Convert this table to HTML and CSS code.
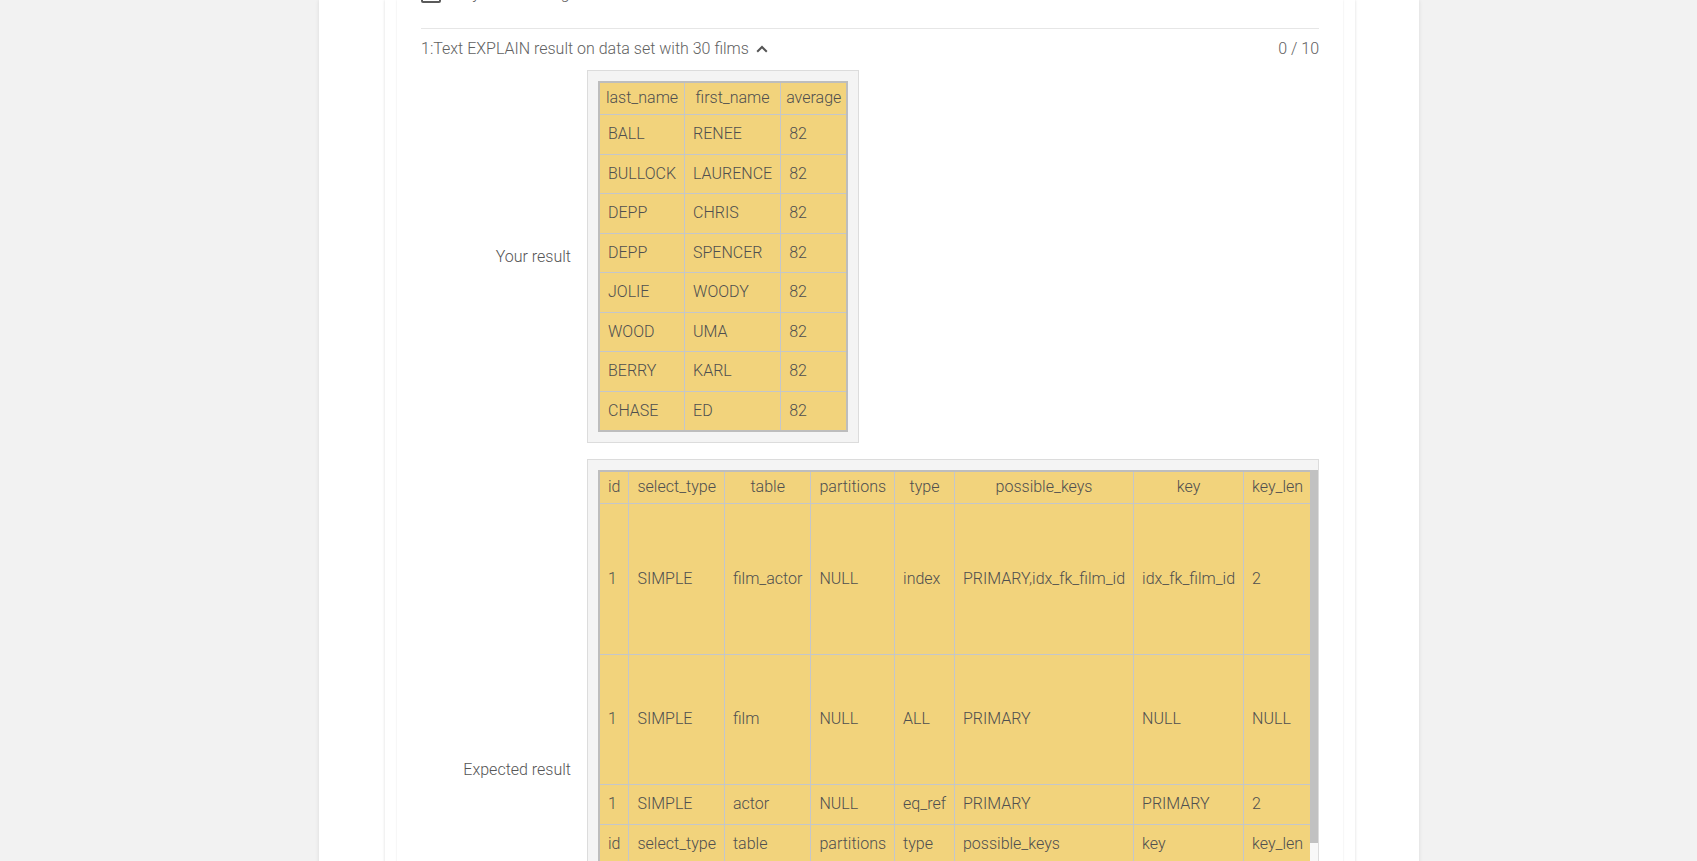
FILE: index.html
```html
<!DOCTYPE html>
<html lang="en">
<head>
<meta charset="utf-8">
<title>Test results</title>
<link rel="stylesheet" href="styles.css">
</head>
<body>
<div class="page">
  <div class="card-outer">
    <div class="card">
      <label class="option"><span class="checkbox"></span><span class="option-text">Only show wrong results</span></label>

      <section class="test">
        <div class="test-head">
          <div class="test-title">
            <span>1:Text EXPLAIN result on data set with 30 films</span>
            <svg class="chevron" width="12" height="8" viewBox="0 0 12 8"><path d="M1.2 6.8 L6 2 L10.8 6.8" fill="none" stroke="#555" stroke-width="2"/></svg>
          </div>
          <div class="score">0 / 10</div>
        </div>

        <div class="result-row">
          <div class="result-label">Your result</div>
          <div class="result-box">
            <table class="grid">
              <tr><th>last_name</th><th>first_name</th><th>average</th></tr>
              <tr><td>BALL</td><td>RENEE</td><td>82</td></tr>
              <tr><td>BULLOCK</td><td>LAURENCE</td><td>82</td></tr>
              <tr><td>DEPP</td><td>CHRIS</td><td>82</td></tr>
              <tr><td>DEPP</td><td>SPENCER</td><td>82</td></tr>
              <tr><td>JOLIE</td><td>WOODY</td><td>82</td></tr>
              <tr><td>WOOD</td><td>UMA</td><td>82</td></tr>
              <tr><td>BERRY</td><td>KARL</td><td>82</td></tr>
              <tr><td>CHASE</td><td>ED</td><td>82</td></tr>
            </table>
          </div>
        </div>

        <div class="result-row">
          <div class="result-label">Expected result</div>
          <div class="result-box result-box--scroll">
            <div class="scroller">
              <table class="grid">
                <tr><th>id</th><th>select_type</th><th>table</th><th>partitions</th><th>type</th><th>possible_keys</th><th>key</th><th>key_len</th><th>ref</th><th>rows</th><th>filtered</th><th>Extra</th></tr>
                <tr class="row-xl"><td>1</td><td>SIMPLE</td><td>film_actor</td><td>NULL</td><td>index</td><td>PRIMARY,idx_fk_film_id</td><td>idx_fk_film_id</td><td>2</td><td>NULL</td><td>5462</td><td>100.00</td><td>Using index; Using temporary; Using filesort</td></tr>
                <tr class="row-l"><td>1</td><td>SIMPLE</td><td>film</td><td>NULL</td><td>ALL</td><td>PRIMARY</td><td>NULL</td><td>NULL</td><td>NULL</td><td>1000</td><td>10.00</td><td>Using where; Using join buffer (Block Nested Loop)</td></tr>
                <tr><td>1</td><td>SIMPLE</td><td>actor</td><td>NULL</td><td>eq_ref</td><td>PRIMARY</td><td>PRIMARY</td><td>2</td><td>sakila.film_actor.actor_id</td><td>1</td><td>100.00</td><td>NULL</td></tr>
                <tr><td>id</td><td>select_type</td><td>table</td><td>partitions</td><td>type</td><td>possible_keys</td><td>key</td><td>key_len</td><td>ref</td><td>rows</td><td>filtered</td><td>Extra</td></tr>
                <tr class="row-xl"><td>1</td><td>SIMPLE</td><td>film_actor</td><td>NULL</td><td>index</td><td>PRIMARY,idx_fk_film_id</td><td>idx_fk_film_id</td><td>2</td><td>NULL</td><td>5462</td><td>100.00</td><td>Using index; Using temporary; Using filesort</td></tr>
                <tr class="row-l"><td>1</td><td>SIMPLE</td><td>film</td><td>NULL</td><td>ALL</td><td>PRIMARY</td><td>NULL</td><td>NULL</td><td>NULL</td><td>1000</td><td>10.00</td><td>Using where; Using join buffer (Block Nested Loop)</td></tr>
                <tr><td>1</td><td>SIMPLE</td><td>actor</td><td>NULL</td><td>eq_ref</td><td>PRIMARY</td><td>PRIMARY</td><td>2</td><td>sakila.film_actor.actor_id</td><td>1</td><td>100.00</td><td>NULL</td></tr>
              </table>
            </div>
            <div class="scrollbar"><div class="scrollbar-thumb"></div></div>
          </div>
        </div>
      </section>
    </div>
  </div>
</div>
</body>
</html>
```

FILE: styles.css
```css
html, body {
  margin: 0;
  height: 100%;
  overflow: hidden;
}

body {
  background: #f2f2f2;
  font-family: Roboto, "Liberation Sans", sans-serif;
  font-weight: 300;
  font-size: 16px;
  color: #555;
}

.page {
  width: 1100px;
  margin-left: 319px;
  min-height: 100%;
  box-sizing: border-box;
  padding: 0 64px 0 66px;
  background: #fff;
  box-shadow: 0 0 4px rgba(0, 0, 0, 0.10);
  display: flow-root;
}

.card-outer {
  min-height: 100vh;
  padding: 0 12px;
  background: #fff;
  box-shadow: 0 0 3px rgba(0, 0, 0, 0.14);
  display: flow-root;
}

.card {
  min-height: 100vh;
  padding: 0 24px;
  background: #fff;
  box-shadow: 0 0 2px rgba(0, 0, 0, 0.10);
  display: flow-root;
}

.option {
  display: flex;
  align-items: center;
  gap: 8px;
  height: 20px;
  margin-top: -17px;
  line-height: 19px;
  color: #555;
}

.checkbox {
  width: 16px;
  height: 16px;
  border: 2px solid #5a5a5a;
  border-radius: 2px;
  flex: none;
}

.test {
  margin-top: 25px;
  border-top: 1px solid #e6e6e6;
}

.test-head {
  display: flex;
  justify-content: space-between;
  align-items: center;
  padding: 10px 0 12px;
  line-height: 19px;
  color: #616161;
}

.test-title {
  display: flex;
  align-items: center;
  gap: 7px;
}

.chevron {
  display: block;
}

.result-row {
  display: flex;
  align-items: center;
  gap: 18px;
}

.result-row + .result-row {
  margin-top: 16px;
}

.result-label {
  width: 150px;
  flex: none;
  text-align: right;
  line-height: 19px;
  color: #555;
}

.result-box {
  flex: 0 1 auto;
  min-width: 0;
  background: #f4f4f4;
  border: 1px solid #dcdcdc;
  padding: 10px;
}

.result-label + .result-box {
  margin-left: -2px;
}

.result-box--scroll {
  display: flex;
  padding-right: 0;
}

.scroller {
  flex: 1 1 auto;
  min-width: 0;
  overflow: hidden;
  max-height: 598px;
}

.scrollbar {
  flex: none;
  width: 8px;
  background: #f8f8f8;
}

.scrollbar-thumb {
  height: 373px;
  background: #c1c1c1;
}

.grid {
  border-collapse: collapse;
  border: 2px solid #bdbdbd;
  background: #f2d37c;
  line-height: 18.5px;
  color: #4f4f4f;
}

.grid th {
  font-weight: 300;
  padding: 6.25px 5px;
  border: 1px solid #c4c6ca;
  white-space: nowrap;
}

.grid td {
  padding: 10px 8px;
  border: 1px solid #c4c6ca;
  white-space: nowrap;
}

.grid .row-xl {
  height: 151px;
}

.grid .row-l {
  height: 130px;
}
```
